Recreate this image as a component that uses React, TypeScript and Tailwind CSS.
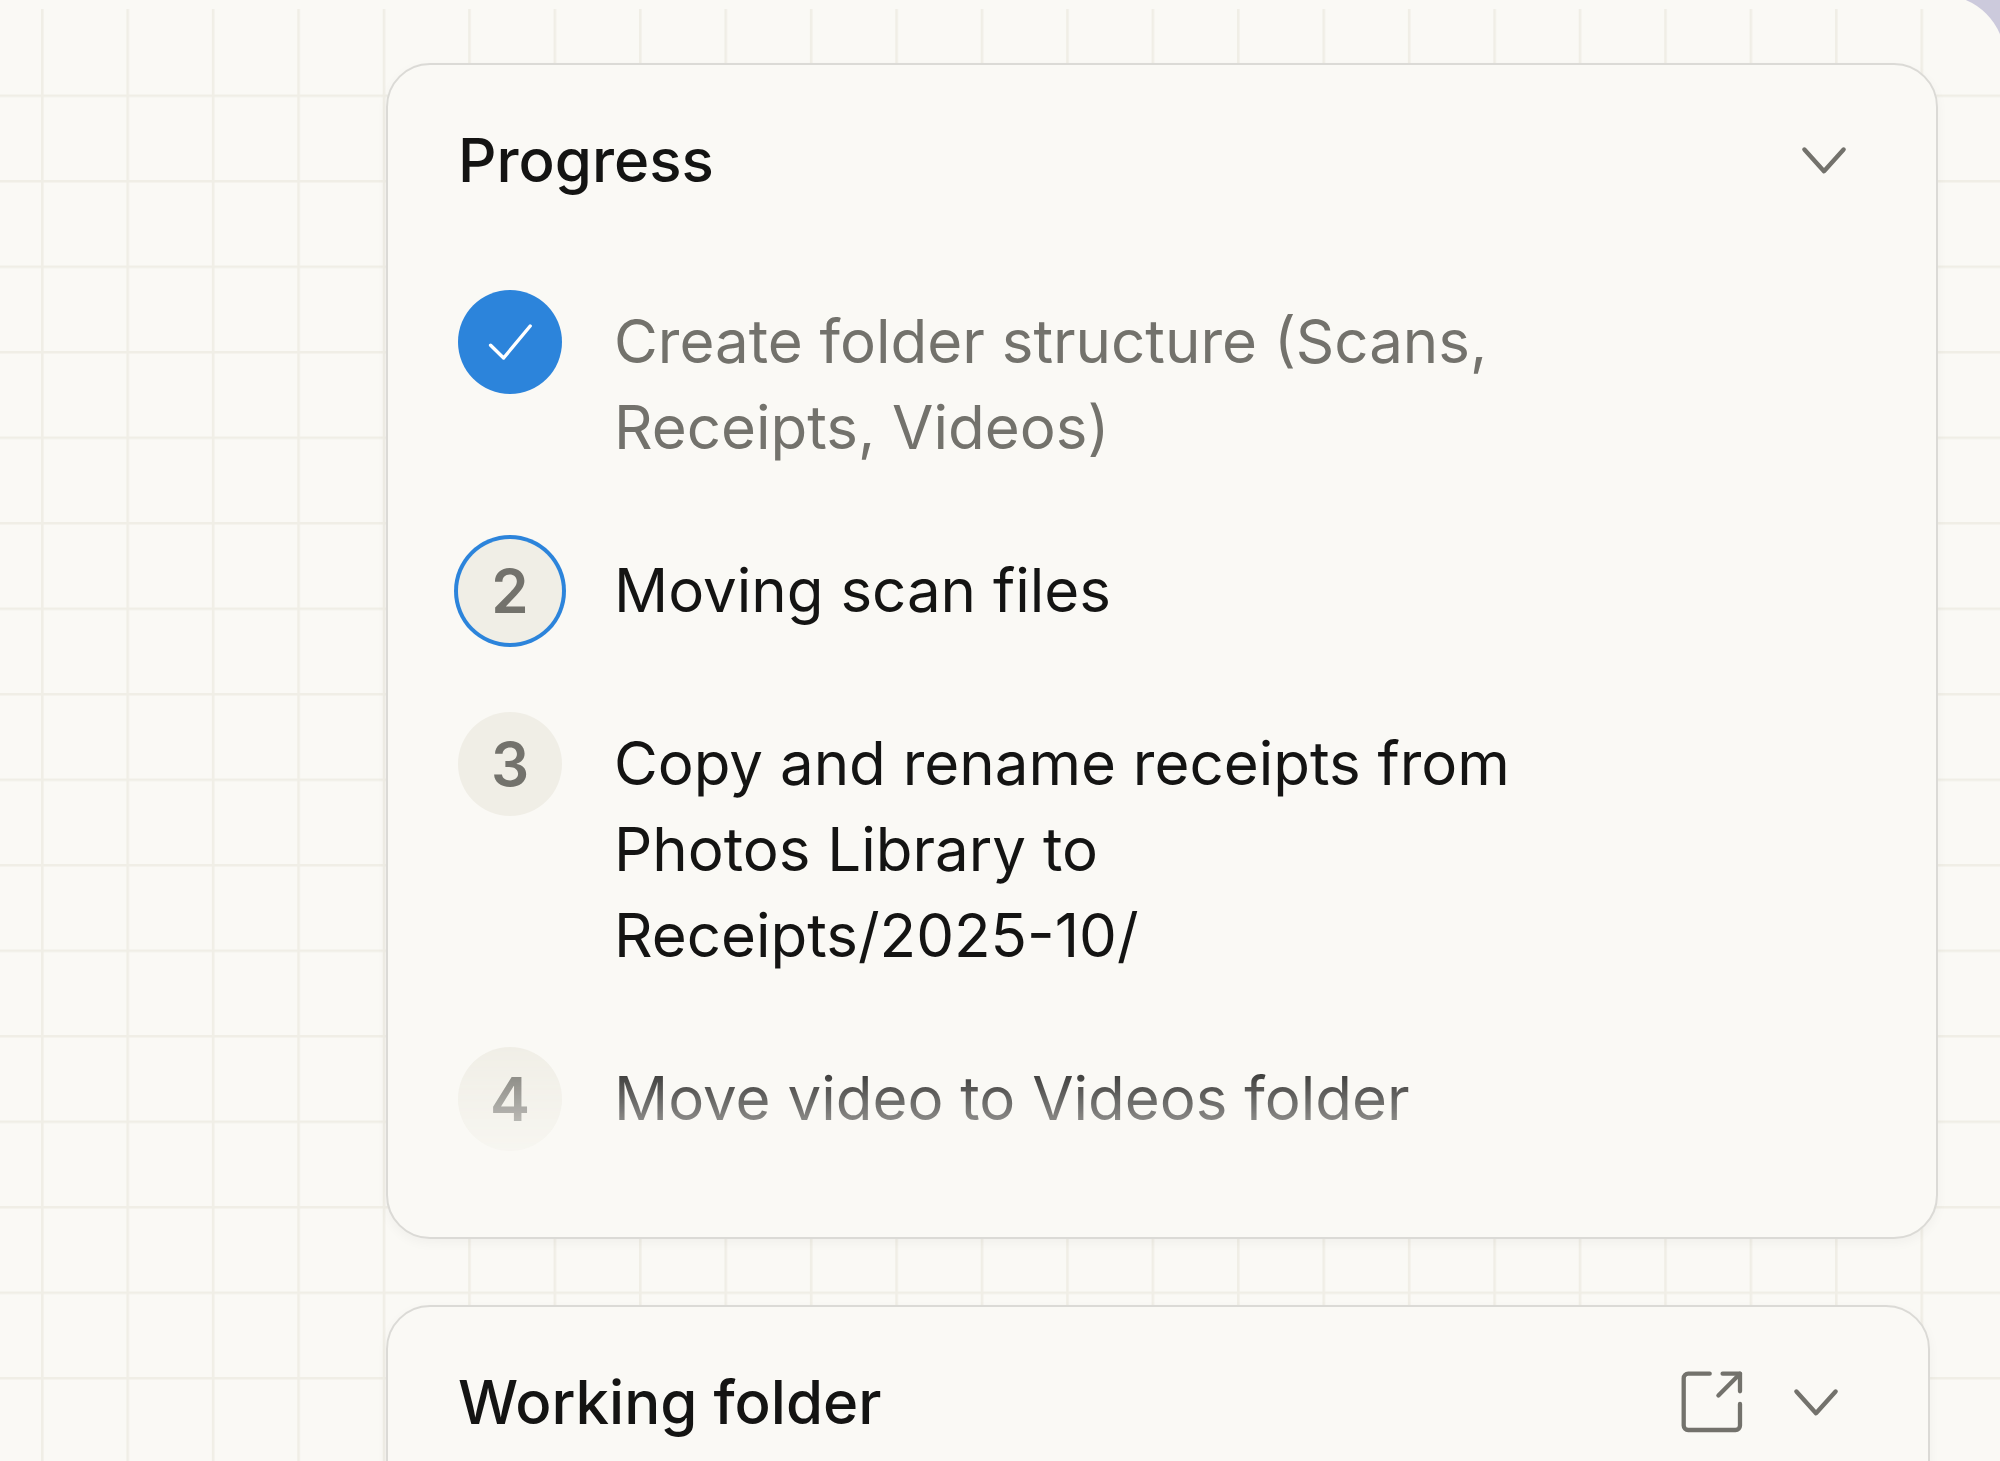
import { useState } from "react";
import type { ReactNode } from "react";
import clsx from "clsx";

type StepStatus = "done" | "active" | "pending";

type Step = {
  id: number;
  label: string;
  status: StepStatus;
};

const STEPS: Step[] = [
  { id: 1, label: "Create folder structure (Scans, Receipts, Videos)", status: "done" },
  { id: 2, label: "Moving scan files", status: "active" },
  { id: 3, label: "Copy and rename receipts from Photos Library to Receipts/2025-10/", status: "pending" },
  { id: 4, label: "Move video to Videos folder", status: "pending" },
];

const BADGE_STYLES: Record<StepStatus, string> = {
  done: "bg-[#2c84db] text-white",
  active: "bg-[#f0eee6] text-[#73726c] ring-4 ring-[#2c84db]",
  pending: "bg-[#f0eee6] text-[#73726c]",
};

function GridBackground() {
  return (
    <svg className="absolute inset-0 size-full" aria-hidden="true">
      <defs>
        <pattern id="grid-columns" x="41" width="85.43" height="85.5" patternUnits="userSpaceOnUse">
          <path d="M1.3 0V85.5" stroke="#f0eee6" strokeWidth="2.6" />
        </pattern>
        <pattern id="grid-rows" y="14" width="85.43" height="85.5" patternUnits="userSpaceOnUse">
          <path d="M0 1.3H85.43" stroke="#f0eee6" strokeWidth="2.6" />
        </pattern>
      </defs>
      <rect y="14" width="100%" height="100%" fill="url(#grid-columns)" />
      <rect y="20" width="100%" height="100%" fill="url(#grid-rows)" />
    </svg>
  );
}

function ChevronIcon() {
  return (
    <svg
      className="size-16"
      viewBox="0 0 64 64"
      fill="none"
      stroke="currentColor"
      strokeWidth="4.4"
      strokeLinecap="round"
      strokeLinejoin="round"
    >
      <path d="M12.4 21.5 32 43.2 51.6 21.5" />
    </svg>
  );
}

function OpenIcon() {
  return (
    <svg
      className="size-16"
      viewBox="0 0 64 64"
      fill="none"
      stroke="currentColor"
      strokeWidth="4.3"
      strokeLinecap="round"
      strokeLinejoin="round"
    >
      <path d="M29.7 3.7H8.2a4.5 4.5 0 0 0-4.5 4.5v47.3a4.5 4.5 0 0 0 4.5 4.5h47.3a4.5 4.5 0 0 0 4.5-4.5V34" />
      <path d="M42.6 3.7H60V21.3" />
      <path d="M60 3.7 38.4 25.4" />
    </svg>
  );
}

function CheckIcon() {
  return (
    <svg
      className="size-16"
      viewBox="0 0 64 64"
      fill="none"
      stroke="currentColor"
      strokeWidth="3.4"
      strokeLinecap="round"
      strokeLinejoin="round"
    >
      <path d="M12.6 35.2 25.6 48 52.2 16" />
    </svg>
  );
}

function Card({
  title,
  actions,
  open,
  onToggle,
  className,
  children,
}: {
  title: string;
  actions?: ReactNode;
  open: boolean;
  onToggle: () => void;
  className?: string;
  children?: ReactNode;
}) {
  return (
    <section
      className={clsx(
        "rounded-[44px] border-2 border-[#dbdad6] bg-[#faf9f5] shadow-[0_4px_12px_rgba(0,0,0,0.04)]",
        className
      )}
    >
      <header className="flex items-center justify-between pt-[52px] pr-20 pl-[70px]">
        <h2 className="font-medium">{title}</h2>
        <div className="flex items-center gap-10 text-[#73726c]">
          {actions}
          <button type="button" aria-label={`Toggle ${title}`} aria-expanded={open} onClick={onToggle}>
            <ChevronIcon />
          </button>
        </div>
      </header>
      {open && children}
    </section>
  );
}

function StepRow({ step }: { step: Step }) {
  return (
    <li className="flex items-start gap-[52px]">
      <span
        className={clsx(
          "flex size-[104px] shrink-0 items-center justify-center rounded-full font-semibold",
          BADGE_STYLES[step.status]
        )}
      >
        {step.status === "done" ? <CheckIcon /> : step.id}
      </span>
      <span className={clsx("max-w-[920px] pt-2", step.status === "done" && "text-[#73726c]")}>
        {step.label}
      </span>
    </li>
  );
}

export default function App() {
  const [progressOpen, setProgressOpen] = useState(true);
  const [folderOpen, setFolderOpen] = useState(true);

  return (
    <div className="h-screen overflow-hidden bg-[#cccadc] font-['Inter',sans-serif] text-[60px] leading-[86px] text-[#141413]">
      <main className="relative -mt-[5px] -mr-[5px] min-h-[calc(100%+5px)] overflow-hidden rounded-tr-[64px] bg-[#faf9f5]">
        <GridBackground />

        <div className="relative flex flex-col gap-[66px] pt-[68px] pr-[67px] pl-[386px]">
          {/* Progress */}
          <Card title="Progress" open={progressOpen} onToggle={() => setProgressOpen(!progressOpen)}>
            {/* steps fade out towards the bottom of the list */}
            <ol className="mb-[46px] flex flex-col gap-[69px] mask-[linear-gradient(to_bottom,black_calc(100%-144px),transparent)] px-[70px] pt-[87px] pb-10">
              {STEPS.map((step) => (
                <StepRow key={step.id} step={step} />
              ))}
            </ol>
          </Card>

          {/* Working folder */}
          <Card
            title="Working folder"
            className="mr-2"
            open={folderOpen}
            onToggle={() => setFolderOpen(!folderOpen)}
            actions={
              <button type="button" aria-label="Open working folder">
                <OpenIcon />
              </button>
            }
          >
            <div className="h-40" />
          </Card>
        </div>
      </main>
    </div>
  );
}
